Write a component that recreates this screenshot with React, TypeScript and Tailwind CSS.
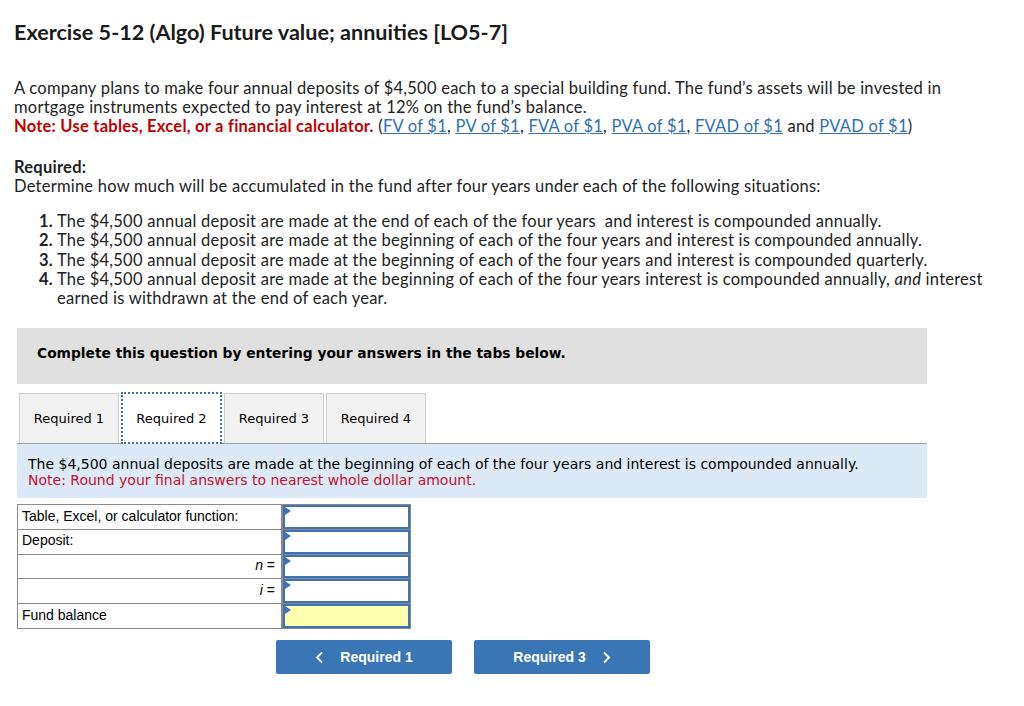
import React from "react";

const body = { fontFamily: "Lato, 'Noto Sans', sans-serif" };
const verdana = { fontFamily: "'DejaVu Sans', Verdana, sans-serif" };
const arial = { fontFamily: "'Liberation Sans', Arial, sans-serif" };

const links = ["FV of $1", "PV of $1", "FVA of $1", "PVA of $1", "FVAD of $1"];

const items = [
  "The $4,500 annual deposit are made at the end of each of the four years\u00a0 and interest is compounded annually.",
  "The $4,500 annual deposit are made at the beginning of each of the four years and interest is compounded annually.",
  "The $4,500 annual deposit are made at the beginning of each of the four years and interest is compounded quarterly.",
];

const tabs = ["Required 1", "Required 2", "Required 3", "Required 4"];

const rows = [
  { label: "Table, Excel, or calculator function:", right: false },
  { label: "Deposit:", right: false },
  { label: "n =", right: true },
  { label: "i =", right: true },
  { label: "Fund balance", right: false, total: true },
];

function Link({ children }: { children: React.ReactNode }) {
  return <span className="text-[#2f6fb3] underline">{children}</span>;
}

function InputCell({ yellow }: { yellow?: boolean }) {
  return (
    <div
      className={`relative h-full border-2 border-[#3d73b5] ${yellow ? "bg-[#ffffb0]" : "bg-white"}`}
    >
      <span className="absolute left-0 top-0 w-0 h-0 border-y-[4px] border-y-transparent border-l-[6px] border-l-[#3d73b5]" />
    </div>
  );
}

export default function App() {
  return (
    <div className="w-[1024px] min-h-[706px] bg-white text-[#222]" style={body}>
      <div className="pl-[14px] pr-4 pt-[19px]">
        <h1 className="text-[21.6px] font-bold leading-[26px] text-[#1a1a1a]">
          Exercise 5-12 (Algo) Future value; annuities [LO5-7]
        </h1>

        <p className="mt-[34px] text-[16.5px] leading-[19px] tracking-[0.24px]">
          A company plans to make four annual deposits of $4,500 each to a special building fund. The fund’s assets will be invested in
          mortgage instruments expected to pay interest at 12% on the fund’s balance.
          <br />
          <span className="font-bold text-[#c00000]">Note: Use tables, Excel, or a financial calculator.</span>{" "}
          (
          {links.map((l, i) => (
            <React.Fragment key={l}>
              <Link>{l}</Link>
              {i < links.length - 1 ? ", " : ""}
            </React.Fragment>
          ))}{" "}
          and <Link>PVAD of $1</Link>)
        </p>

        <p className="mt-[22px] text-[16.5px] leading-[19px] tracking-[0.24px] font-bold">Required:</p>
        <p className="text-[16.5px] leading-[19px] tracking-[0.24px]">
          Determine how much will be accumulated in the fund after four years under each of the following situations:
        </p>

        <ol className="mt-[16px] pl-[21px] text-[16.5px] leading-[19.3px] tracking-[0.24px]">
          {items.map((t, i) => (
            <li key={i} className="flex">
              <span className="w-[22px] text-right pr-[4px] font-bold shrink-0">{i + 1}.</span>
              <span>{t}</span>
            </li>
          ))}
          <li className="flex">
            <span className="w-[22px] text-right pr-[4px] font-bold shrink-0">4.</span>
            <span>
              <span>The $4,500 annual deposit are made at the beginning of each of the four years interest is compounded annually, </span>
              <em>and</em>
              <span> interest</span>
              <br />
              <span>earned is withdrawn at the end of each year.</span>
            </span>
          </li>
        </ol>
      </div>

      <div className="ml-[17px] w-[910px] mt-[20px]">
        <div className="h-[56px] bg-[#e0e0e0] flex items-center pl-[20px] pb-[6px]" style={verdana}>
          <span className="text-[13.8px] font-bold text-black">Complete this question by entering your answers in the tabs below.</span>
        </div>

        <div className="mt-[8px] flex items-end pl-[2px] gap-[2px]" style={verdana}>
          {tabs.map((t, i) =>
            i === 1 ? (
              <div
                key={t}
                className="h-[52px] w-[101px] bg-white border-2 border-dotted border-[#3d73b5] -mb-[1px] flex items-center justify-center text-[13px] text-black relative z-10"
              >
                {t}
              </div>
            ) : (
              <div
                key={t}
                className="h-[50px] w-[100px] bg-[#f2f2f2] border border-[#cfcfcf] border-b-0 flex items-center justify-center text-[13px] text-black"
              >
                {t}
              </div>
            )
          )}
        </div>
        <div className="border-t border-[#9a9a9a] bg-[#dbeaf6] h-[55px] pl-[11px] pt-[12px] text-[14px] leading-[16px]" style={verdana}>
          <div className="text-black">
            The $4,500 annual deposits are made at the beginning of each of the four years and interest is compounded annually.
          </div>
          <div className="text-[#c8102e]">Note: Round your final answers to nearest whole dollar amount.</div>
        </div>

        <div className="mt-[6px] w-[394px] border border-[#8a8a8a]" style={arial}>
          {rows.map((r, i) => (
            <div
              key={r.label}
              className={`flex h-[24.6px] ${i < rows.length - 1 ? "border-b border-[#8a8a8a]" : ""}`}
            >
              <div
                className={`w-[265px] border-r-2 border-[#8a8a8a] px-[4px] flex items-center text-[14px] leading-[16px] text-black pb-[3px] ${
                  r.right ? "justify-end pr-[6px]" : ""
                }`}
              >
                {r.right ? (
                  <span>
                    <span className="italic">{r.label.split(" ")[0]}</span>
                    <span> =</span>
                  </span>
                ) : (
                  r.label
                )}
              </div>
              <div className="flex-1">
                <InputCell yellow={r.total} />
              </div>
            </div>
          ))}
        </div>

        <div className="mt-[11px] flex gap-[22px] pl-[259px]" style={arial}>
          <button className="w-[176px] h-[34px] bg-[#3a75b6] rounded-[2px] text-white font-bold text-[14px] flex items-center justify-center gap-[16px]">
            <svg width="9" height="13" viewBox="0 0 9 13" fill="none">
              <path d="M7 1.5L2 6.5L7 11.5" stroke="white" strokeWidth="1.8" />
            </svg>
            Required 1
          </button>
          <button className="w-[176px] h-[34px] bg-[#3a75b6] rounded-[2px] text-white font-bold text-[14px] flex items-center justify-center gap-[16px]">
            Required 3
            <svg width="9" height="13" viewBox="0 0 9 13" fill="none">
              <path d="M2 1.5L7 6.5L2 11.5" stroke="white" strokeWidth="1.8" />
            </svg>
          </button>
        </div>
      </div>
    </div>
  );
}
